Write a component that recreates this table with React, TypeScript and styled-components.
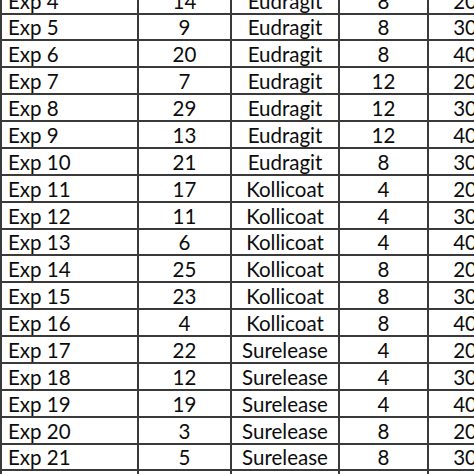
import React from "react";
import styled, { createGlobalStyle } from "styled-components";

type Row = {
  exp: string;
  run: string;
  polymer: string;
  level: string;
  amount: string;
};

const rows: Row[] = [
  { exp: "Exp 4", run: "14", polymer: "Eudragit", level: "8", amount: "200" },
  { exp: "Exp 5", run: "9", polymer: "Eudragit", level: "8", amount: "300" },
  { exp: "Exp 6", run: "20", polymer: "Eudragit", level: "8", amount: "400" },
  { exp: "Exp 7", run: "7", polymer: "Eudragit", level: "12", amount: "200" },
  { exp: "Exp 8", run: "29", polymer: "Eudragit", level: "12", amount: "300" },
  { exp: "Exp 9", run: "13", polymer: "Eudragit", level: "12", amount: "400" },
  { exp: "Exp 10", run: "21", polymer: "Eudragit", level: "8", amount: "300" },
  { exp: "Exp 11", run: "17", polymer: "Kollicoat", level: "4", amount: "200" },
  { exp: "Exp 12", run: "11", polymer: "Kollicoat", level: "4", amount: "300" },
  { exp: "Exp 13", run: "6", polymer: "Kollicoat", level: "4", amount: "400" },
  { exp: "Exp 14", run: "25", polymer: "Kollicoat", level: "8", amount: "200" },
  { exp: "Exp 15", run: "23", polymer: "Kollicoat", level: "8", amount: "300" },
  { exp: "Exp 16", run: "4", polymer: "Kollicoat", level: "8", amount: "400" },
  { exp: "Exp 17", run: "22", polymer: "Surelease", level: "4", amount: "200" },
  { exp: "Exp 18", run: "12", polymer: "Surelease", level: "4", amount: "300" },
  { exp: "Exp 19", run: "19", polymer: "Surelease", level: "4", amount: "400" },
  { exp: "Exp 20", run: "3", polymer: "Surelease", level: "8", amount: "200" },
  { exp: "Exp 21", run: "5", polymer: "Surelease", level: "8", amount: "300" },
  { exp: "", run: "", polymer: "", level: "", amount: "" },
];

const GlobalStyle = createGlobalStyle`
  html, body {
    margin: 0;
    padding: 0;
    background: #ffffff;
    overflow: hidden;
  }
`;

const App: React.FC = () => {
  return (
    <>
      <GlobalStyle />
      <Sheet>
        {rows.map((row, i) => (
          <TableRow key={i}>
            <Cell align="left">{row.exp}</Cell>
            <Cell>{row.run}</Cell>
            <Cell>{row.polymer}</Cell>
            <Cell>{row.level}</Cell>
            <Cell>{row.amount}</Cell>
          </TableRow>
        ))}
      </Sheet>
    </>
  );
};

const Sheet = styled.div`
  display: flex;
  flex-direction: column;
  width: 515px;
  margin-top: -13.4px;
  border-left: 2px solid #3a3a3a;
  font-family: Lato, "Liberation Sans", sans-serif;
  font-size: 20.5px;
  color: #0c0c0c;
`;

const TableRow = styled.div`
  display: grid;
  grid-template-columns: 137px 93px 108px 89px 86px;
  height: 26.88px;
  box-sizing: border-box;
`;

const Cell = styled.div<{ align?: "left" | "center" }>`
  display: flex;
  align-items: center;
  justify-content: ${({ align }) => (align === "left" ? "flex-start" : "center")};
  padding: 2px 0 0 ${({ align }) => (align === "left" ? "6px" : "0")};
  box-sizing: border-box;
  border-right: 2px solid #3a3a3a;
  border-bottom: 2px solid #3a3a3a;
  white-space: nowrap;
`;

export default App;
